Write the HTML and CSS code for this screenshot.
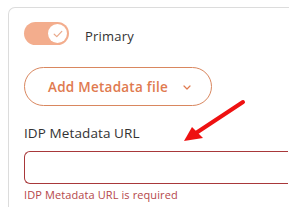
FILE: index.html
```html
<!DOCTYPE html>
<html>
<head>
<meta charset="utf-8">
<link rel="stylesheet" href="styles.css">
</head>
<body>
<div class="card">
  <div class="toggle-row">
    <span class="toggle">
      <span class="knob">
        <svg width="10" height="8" viewBox="0 0 10 8"><path d="M1.2 4.2 L3.8 6.6 L8.8 1.4" fill="none" stroke="#e9a98b" stroke-width="1.2" stroke-linecap="round" stroke-linejoin="round"/></svg>
      </span>
    </span>
    <span class="toggle-label">Primary</span>
  </div>
  <button class="add-btn">Add Metadata file
    <svg class="chev" width="8" height="5" viewBox="0 0 8 5"><path d="M1 1 L4 4 L7 1" fill="none" stroke="#e07a4f" stroke-width="1.2" stroke-linecap="round" stroke-linejoin="round"/></svg>
  </button>
  <label class="field-label">IDP Metadata URL</label>
  <div class="input"></div>
  <div class="error">IDP Metadata URL is required</div>
</div>
<svg class="arrow" width="289" height="207" viewBox="0 0 289 207">
  <line x1="243" y1="102" x2="196" y2="133" stroke="#ee1111" stroke-width="4" stroke-linecap="round"/>
  <polygon points="184,141 192,127 203,138" fill="#ee1111"/>
</svg>
</body>
</html>
```
FILE: styles.css
```css
html, body {
  margin: 0;
  padding: 0;
  background: #fff;
  overflow: hidden;
  height: 207px;
}
body {
  font-family: "Open Sans", "Liberation Sans", sans-serif;
  color: #333;
}
.card {
  margin: 7px 0 0 8px;
  border-top: 1px solid #dcdcdc;
  border-left: 1px solid #dcdcdc;
  border-top-left-radius: 7px;
  padding: 14px 0 0 15px;
  height: 200px;
  box-sizing: border-box;
  display: flex;
  flex-direction: column;
  align-items: flex-start;
}
.card > * {
  flex-shrink: 0;
}
.toggle-row {
  display: flex;
  align-items: center;
  height: 23px;
}
.toggle {
  width: 45px;
  height: 23px;
  border-radius: 12px;
  background: #f3ad8d;
  display: flex;
  align-items: center;
  justify-content: flex-end;
  padding-right: 2px;
  box-sizing: border-box;
}
.knob {
  width: 19px;
  height: 19px;
  border-radius: 50%;
  background: #fff;
  display: flex;
  align-items: center;
  justify-content: center;
}
.toggle-label {
  margin-left: 16px;
  font-size: 13px;
  letter-spacing: 0.2px;
  color: #333;
  position: relative;
  top: 2px;
}
.add-btn {
  margin-top: 22px;
  width: 188px;
  height: 39px;
  border: 1px solid #d9875f;
  border-radius: 20px;
  background: #fff;
  color: #e07a4f;
  font-family: inherit;
  font-weight: 600;
  font-size: 13.5px;
  letter-spacing: 0.25px;
  padding: 0 0 0 23px;
  display: flex;
  align-items: center;
  box-sizing: border-box;
}
.chev {
  margin-left: 15px;
  margin-top: 1px;
}
.field-label {
  margin-top: 17px;
  font-size: 13.5px;
  letter-spacing: 0.1px;
  line-height: 20px;
  color: #333;
}
.input {
  margin-top: 8px;
  width: 264px;
  height: 33px;
  border: 1px solid #a8383a;
  border-right: none;
  border-radius: 6px 0 0 6px;
  box-sizing: border-box;
}
.error {
  margin-top: 3px;
  font-size: 11px;
  letter-spacing: 0.1px;
  line-height: 15px;
  color: #b5474a;
}
.arrow {
  position: absolute;
  left: 0;
  top: 0;
  pointer-events: none;
}
```
